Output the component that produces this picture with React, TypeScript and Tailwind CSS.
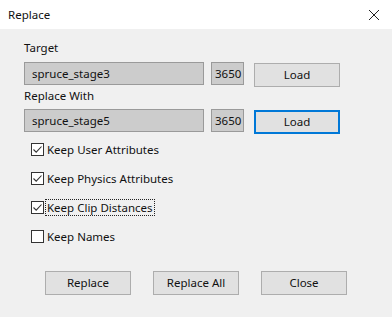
import React from "react";

const font = { fontFamily: '"Segoe UI", "Noto Sans", "Liberation Sans", sans-serif' };

function Field({ value, w, pad }: { value: string; w: string; pad: string }) {
	return (
		<div
			className={`${w} ${pad} h-[23px] shrink-0 overflow-hidden whitespace-nowrap border border-[#9a9a9a] bg-[#cccccc] text-[11.5px] leading-[21px] text-[#111]`}
		>
			{value}
		</div>
	);
}

function Btn({ label, w, focused }: { label: string; w: string; focused?: boolean }) {
	return (
		<div
			className={`${w} h-[24px] shrink-0 bg-[#e1e1e1] text-center text-[11.5px] text-[#111] ${
				focused
					? "border-2 border-[#0078d7] leading-[20px]"
					: "border border-[#adadad] leading-[22px]"
			}`}
		>
			{label}
		</div>
	);
}

function Check({ label, checked, focus }: { label: string; checked?: boolean; focus?: boolean }) {
	return (
		<div className="flex h-[29px] items-center pl-[31px]">
			<div className="flex h-[13px] w-[13px] items-center justify-center border border-[#333] bg-white">
				{checked && (
					<svg width="11" height="11" viewBox="0 0 11 11">
						<path d="M1.5 5.5 L4.2 8.2 L9.5 2.5" fill="none" stroke="#333" strokeWidth="1.1" />
					</svg>
				)}
			</div>
			<span
				className={`ml-[2px] px-[1px] text-[11.5px] leading-[15px] text-[#111] ${
					focus ? "outline outline-1 outline-dotted outline-[#222]" : ""
				}`}
			>
				{label}
			</span>
		</div>
	);
}

export default function App() {
	return (
		<div className="h-[317px] w-[392px] bg-[#f0f0f0]" style={font}>
			{/* 타이틀 바 */}
			<div className="flex h-[29px] items-center justify-between bg-white pl-[8px] pr-[12px]">
				<span className="text-[11.5px] text-[#111]">Replace</span>
				<svg width="12" height="12" viewBox="0 0 12 12">
					<path d="M1 1 L11 11 M11 1 L1 11" stroke="#222" strokeWidth="1" />
				</svg>
			</div>

			<div className="pl-[24px]">
				<div className="pt-[11px] text-[11.5px] leading-[16px] text-[#111]">Target</div>
				<div className="mt-[6px] flex items-start">
					<Field value="spruce_stage3" w="w-[180px]" pad="pl-[7px]" />
					<div className="w-[7px]" />
					<Field value="3650" w="w-[33px]" pad="pl-[3px]" />
					<div className="w-[10px]" />
					<div className="pt-[1px]">
						<Btn label="Load" w="w-[86px]" />
					</div>
				</div>

				<div className="mt-[1px] text-[11.5px] leading-[16px] text-[#111]">Replace With</div>
				<div className="mt-[5px] flex items-start">
					<Field value="spruce_stage5" w="w-[180px]" pad="pl-[7px]" />
					<div className="w-[7px]" />
					<Field value="3650" w="w-[33px]" pad="pl-[3px]" />
					<div className="w-[10px]" />
					<div className="pt-[1px]">
						<Btn label="Load" w="w-[86px]" focused />
					</div>
				</div>
			</div>

			<div className="mt-[1px]">
				<Check label="Keep User Attributes" checked />
				<Check label="Keep Physics Attributes" checked />
				<Check label="Keep Clip Distances" checked focus />
				<Check label="Keep Names" />
			</div>

			<div className="mt-[20px] flex gap-[22px] pl-[45px]">
				<Btn label="Replace" w="w-[86px]" />
				<Btn label="Replace All" w="w-[86px]" />
				<Btn label="Close" w="w-[86px]" />
			</div>
		</div>
	);
}
